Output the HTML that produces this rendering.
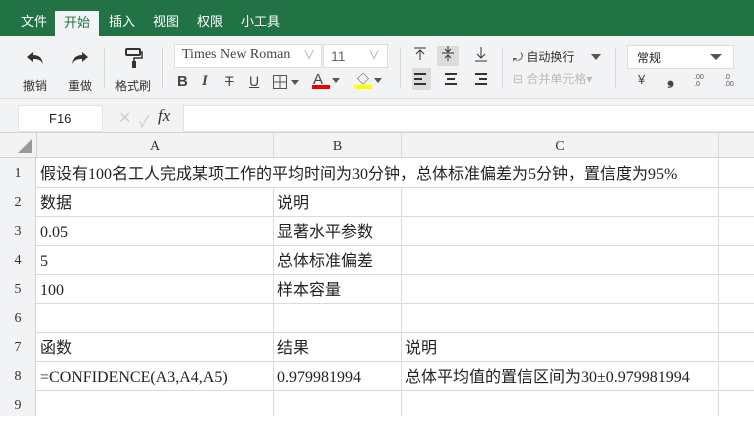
<!DOCTYPE html>
<html><head><meta charset="utf-8"><style>
*{margin:0;padding:0;box-sizing:border-box}
body{width:754px;height:416px;overflow:hidden;background:#fff;font-family:"Liberation Sans","Noto Sans CJK SC",sans-serif;position:relative}
.a{position:absolute}
.top{left:0;top:0;width:754px;height:36px;background:#217346}
.tab{top:14px;font-size:13px;color:#fff;line-height:16px}
.tabon{left:55px;top:11px;width:44px;height:25px;background:#f2f3f5;color:#217346;font-size:13px;text-align:center;line-height:24px}
.rib{left:0;top:36px;width:754px;height:63px;background:#f2f3f5;border-bottom:1px solid #dcdcdc}
.fb{left:0;top:99px;width:754px;height:34px;background:#f2f3f5;border-bottom:1px solid #d4d4d4}
.lbl{font-size:12px;color:#333}
.sep{width:1px;background:#d8d8d8;top:48px;height:40px}
.box{background:#fff;border:1px solid #ddd}
.hdr{left:0;top:133px;width:754px;height:25px;background:#f2f3f5;border-bottom:1px solid #d4d4d4}
.ch{top:133px;height:25px;font-family:"Liberation Serif",serif;font-size:14px;color:#333;text-align:center;line-height:27px;border-right:1px solid #d8d8d8}
.rn{left:0;width:36px;font-family:"Liberation Serif",serif;font-size:14px;color:#333;text-align:center;height:29px;line-height:31px}
.hl{left:36px;width:718px;height:1px;background:#dadada}
.vl{top:158px;width:1px;height:258px;background:#dadada}
.c{font-family:"Liberation Serif","Noto Sans CJK SC",serif;font-size:16px;color:#222;line-height:31px;white-space:nowrap}
</style></head><body>
<div class="a top"></div>
<div class="a tab" style="left:21px">文件</div>
<div class="a tabon">开始</div>
<div class="a tab" style="left:109px">插入</div>
<div class="a tab" style="left:153px">视图</div>
<div class="a tab" style="left:197px">权限</div>
<div class="a tab" style="left:241px">小工具</div>
<div class="a rib"></div>
<svg class="a" style="left:25px;top:50px" width="20" height="16"><path d="M8 2 L2 7 L8 12 V9 C13 9 16 10 18 14 C17 8 14 5 8 5Z" fill="#333"/></svg>
<svg class="a" style="left:70px;top:50px" width="20" height="16"><path d="M12 2 L18 7 L12 12 V9 C7 9 4 10 2 14 C3 8 6 5 12 5Z" fill="#333"/></svg>
<div class="a lbl" style="left:23px;top:77px">撤销</div>
<div class="a lbl" style="left:68px;top:77px">重做</div>
<div class="a sep" style="left:104px"></div>
<svg class="a" style="left:124px;top:47px" width="20" height="22"><rect x="2" y="2" width="14" height="6" rx="1" fill="none" stroke="#333" stroke-width="2"/><path d="M16 5 H18 V11 H10 V14" fill="none" stroke="#333" stroke-width="1.5"/><rect x="8" y="14" width="4" height="7" fill="#333"/></svg>
<div class="a lbl" style="left:115px;top:77px">格式刷</div>
<div class="a sep" style="left:162px"></div>
<div class="a box" style="left:174px;top:44px;width:148px;height:24px;border-color:#ddd"></div>
<div class="a" style="left:182px;top:47px;font-family:'Liberation Serif',serif;font-size:14px;color:#444">Times New Roman</div>
<div class="a" style="left:303px;top:46px;color:#aaa;font-size:12px">∨</div>
<div class="a box" style="left:323px;top:44px;width:65px;height:24px"></div>
<div class="a" style="left:331px;top:48px;font-size:14px;color:#666">11</div>
<div class="a" style="left:368px;top:46px;color:#aaa;font-size:12px">∨</div>
<div class="a" style="left:177px;top:73px;font-weight:bold;font-size:15px;color:#444">B</div>
<div class="a" style="left:202px;top:73px;font-style:italic;font-weight:bold;font-family:'Liberation Serif',serif;font-size:15px;color:#444">I</div>
<div class="a" style="left:225px;top:73px;font-size:14px;color:#444;text-decoration:line-through">T</div>
<div class="a" style="left:249px;top:73px;font-size:14px;color:#444;text-decoration:underline">U</div>
<svg class="a" style="left:273px;top:75px" width="30" height="14"><rect x="0.5" y="0.5" width="13" height="13" fill="none" stroke="#555"/><path d="M7 0V14M0 7H14" stroke="#555"/><path d="M18 5H26L22 10Z" fill="#555"/></svg>
<div class="a" style="left:313px;top:71px;font-size:15px;color:#444">A</div>
<div class="a" style="left:312px;top:85px;width:18px;height:4px;background:#e00"></div>
<svg class="a" style="left:332px;top:78px" width="10" height="6"><path d="M0 0H8L4 5Z" fill="#555"/></svg>
<div class="a" style="left:357px;top:70px;font-size:12px;color:#444">◇</div>
<div class="a" style="left:354px;top:85px;width:18px;height:4px;background:#ff0"></div>
<svg class="a" style="left:374px;top:78px" width="10" height="6"><path d="M0 0H8L4 5Z" fill="#555"/></svg>
<div class="a sep" style="left:400px"></div>
<svg class="a" style="left:412px;top:46px" width="85" height="46">
<path d="M2 2H14M8 4V14M4 8L8 4L12 8" stroke="#333" fill="none"/>
<rect x="25" y="-2" width="22" height="22" fill="#dcdcdc"/>
<path d="M30 7H42M36 0V5M33 3L36 6L39 3M36 15V10M33 12L36 9L39 12" stroke="#333" fill="none"/>
<path d="M63 15H75M69 1V12M65 8L69 12L73 8" stroke="#333" fill="none"/>
<rect x="-3" y="22" width="22" height="22" fill="#dcdcdc"/>
<path d="M2 28H14M2 33H10M2 38H14" stroke="#333" stroke-width="2"/>
<path d="M33 28H45M35 33H43M33 38H45" stroke="#333" stroke-width="2"/>
<path d="M63 28H75M67 33H75M63 38H75" stroke="#333" stroke-width="2"/>
</svg>
<div class="a sep" style="left:502px"></div>
<div class="a" style="left:513px;top:48px;font-size:12px;color:#333">⤾ 自动换行</div>
<svg class="a" style="left:591px;top:54px" width="10" height="6"><path d="M0 0H10L5 6Z" fill="#555"/></svg>
<div class="a" style="left:513px;top:70px;font-size:12px;color:#bbb">⊟ 合并单元格▾</div>
<div class="a sep" style="left:615px"></div>
<div class="a box" style="left:627px;top:45px;width:107px;height:24px"></div>
<div class="a" style="left:637px;top:49px;font-size:12px;color:#222">常规</div>
<svg class="a" style="left:710px;top:54px" width="12" height="7"><path d="M0 0H12L6 6Z" fill="#555"/></svg>
<div class="a" style="left:638px;top:72px;font-size:13px;color:#444">¥</div>
<div class="a" style="left:667px;top:68px;font-size:18px;font-weight:bold;color:#444">❟</div>
<div class="a" style="left:694px;top:74px;font-size:7px;color:#555;line-height:7px">.00<br>.0</div>
<div class="a" style="left:724px;top:74px;font-size:7px;color:#555;line-height:7px">.0<br>.00</div>
<div class="a fb"></div>
<div class="a box" style="left:18px;top:105px;width:85px;height:27px;border-color:#e4e4e4"></div>
<div class="a" style="left:49px;top:111px;font-size:13px;color:#222">F16</div>
<div class="a" style="left:118px;top:108px;font-size:16px;color:#ccc">✕</div>
<div class="a" style="left:139px;top:108px;font-size:16px;color:#ccc">✓</div>
<div class="a" style="left:158px;top:106px;font-family:'Liberation Serif',serif;font-style:italic;font-size:17px;color:#333">fx</div>
<div class="a box" style="left:183px;top:105px;width:571px;height:27px;border-color:#e4e4e4;border-right:none"></div>
<div class="a hdr"></div>
<svg class="a" style="left:18px;top:139px" width="14" height="14"><path d="M14 0V14H0Z" fill="#999"/></svg>
<div class="a" style="left:36px;top:133px;width:1px;height:25px;background:#d4d4d4"></div>
<div class="a ch" style="left:37px;width:237px">A</div>
<div class="a ch" style="left:274px;width:128px">B</div>
<div class="a ch" style="left:402px;width:317px">C</div>
<div class="a" style="left:0;top:158px;width:36px;height:258px;background:#f2f3f5;border-right:1px solid #d4d4d4"></div>
<div class="a rn" style="top:158px">1</div>
<div class="a rn" style="top:187px">2</div>
<div class="a rn" style="top:216px">3</div>
<div class="a rn" style="top:245px">4</div>
<div class="a rn" style="top:274px">5</div>
<div class="a rn" style="top:303px">6</div>
<div class="a rn" style="top:332px">7</div>
<div class="a rn" style="top:361px">8</div>
<div class="a rn" style="top:390px">9</div>
<div class="a hl" style="top:187px"></div>
<div class="a hl" style="top:216px"></div>
<div class="a hl" style="top:245px"></div>
<div class="a hl" style="top:274px"></div>
<div class="a hl" style="top:303px"></div>
<div class="a hl" style="top:332px"></div>
<div class="a hl" style="top:361px"></div>
<div class="a hl" style="top:390px"></div>
<div class="a vl" style="left:273px;top:187px;height:229px"></div>
<div class="a vl" style="left:401px;top:187px;height:229px"></div>
<div class="a vl" style="left:718px"></div>
<div class="a c" style="left:40px;top:159px">假设有100名工人完成某项工作的平均时间为30分钟，总体标准偏差为5分钟，置信度为95%</div>
<div class="a c" style="left:40px;top:188px">数据</div>
<div class="a c" style="left:277px;top:188px">说明</div>
<div class="a c" style="left:40px;top:217px">0.05</div>
<div class="a c" style="left:277px;top:217px">显著水平参数</div>
<div class="a c" style="left:40px;top:246px">5</div>
<div class="a c" style="left:277px;top:246px">总体标准偏差</div>
<div class="a c" style="left:40px;top:275px">100</div>
<div class="a c" style="left:277px;top:275px">样本容量</div>
<div class="a c" style="left:40px;top:333px">函数</div>
<div class="a c" style="left:277px;top:333px">结果</div>
<div class="a c" style="left:405px;top:333px">说明</div>
<div class="a c" style="left:40px;top:362px">=CONFIDENCE(A3,A4,A5)</div>
<div class="a c" style="left:277px;top:362px">0.979981994</div>
<div class="a c" style="left:405px;top:362px">总体平均值的置信区间为30±0.979981994</div>
</body></html>
